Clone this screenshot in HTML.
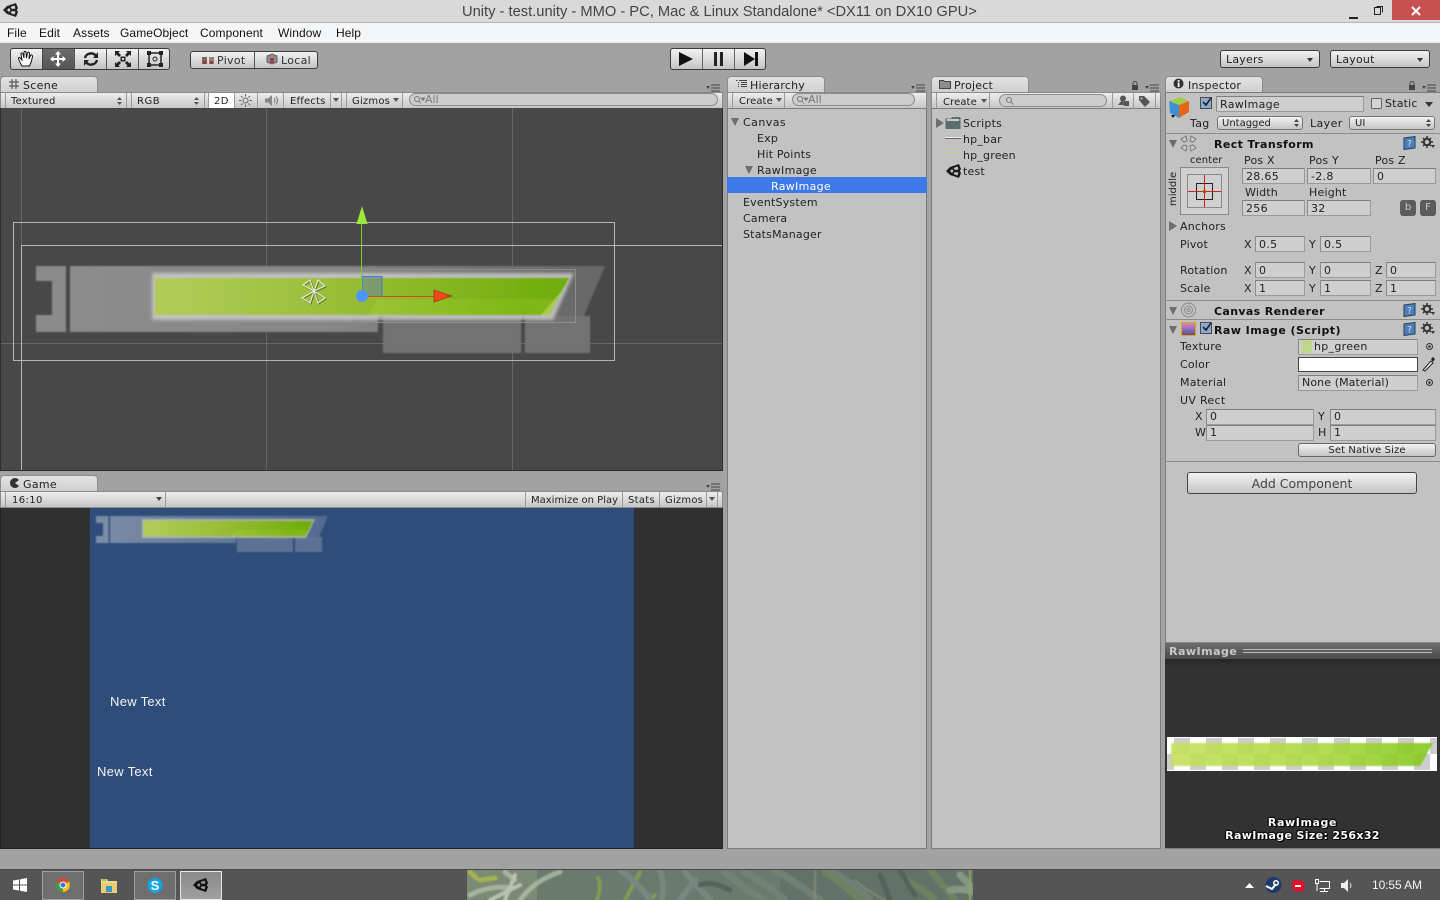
<!DOCTYPE html>
<html><head><meta charset="utf-8"><title>Unity - test.unity</title>
<style>
html,body{margin:0;padding:0;width:1440px;height:900px;overflow:hidden;background:#a2a2a2}
*{box-sizing:border-box}
div,span,svg{position:absolute}
body{font:11px/14px "DejaVu Sans","Liberation Sans",sans-serif;color:#1a1a1a}
.t{white-space:nowrap;height:14px;line-height:14px;padding-top:1px}
.np{padding-top:0}
.b{font-weight:bold}
.m{font-family:"Liberation Sans",sans-serif;font-size:12px;letter-spacing:.1px;color:#111;top:26px;padding-top:0}
.tab{background:linear-gradient(#e2e2e2,#cfcfcf);border:1px solid #8c8c8c;border-bottom:0;border-radius:4px 4px 0 0;height:17px;top:76px;width:98px}
.bar{background:linear-gradient(#ededed,#c6c6c6);border:1px solid #8a8a8a;height:17px}
.sep{width:1px;background:#9a9a9a;top:93px;height:15px}
.panel{background:#c2c2c2;border:1px solid #7c7c7c;top:108px;height:741px}
.btn{background:linear-gradient(#f2f2f2,#c4c4c4);border:1px solid #3c3c3c;border-radius:3px}
.f{background:#cfcfcf;border:1px solid #9a9a9a;border-top-color:#7e7e7e;border-left-color:#8c8c8c;height:16px;padding-left:3px;line-height:14px;white-space:nowrap;color:#222}
.g{padding-top:1px}
.h{height:1px;background:#8a8a8a;left:1165px;width:275px}
.lab{color:#222;letter-spacing:.2px}
.srch{border:1px solid #8a8a8a;border-radius:8px;background:#cdcdcd;height:13px}
.mn{width:14px;height:8px}
.tri{width:0;height:0;border-left:4px solid transparent;border-right:4px solid transparent;border-top:8px solid #6d6d6d}
.trir{width:0;height:0;border-top:5px solid transparent;border-bottom:5px solid transparent;border-left:8px solid #6d6d6d}
.dd{width:0;height:0;border-left:3px solid transparent;border-right:3px solid transparent;border-top:4px solid #333}
.shadow{text-shadow:1px 1px 0 #000,-1px 0 1px #000,0 -1px 1px #000,1px 0 1px #000}
</style></head>
<body>
<!-- title bar -->
<div style="left:0;top:0;width:1440px;height:23px;background:#d9d9d9;border-bottom:1px solid #b4b4b4"></div>
<svg style="left:3px;top:3px" width="15" height="14" viewBox="0 0 15 14"><path d="M0 7L4 3L13 0L15 5L13.800 7L15 9L13 14L4 11Z M4 7L6 5L7.500 7L6 9Z M7.500 4L11.500 2.500L12.500 5.500L9 6Z M7.500 10L9 8L12.500 8.500L11.500 11.500Z" fill="#222" fill-rule="evenodd"/></svg>
<div class="t np" style="left:462px;top:3px;height:18px;font:14.7px/18px 'Liberation Sans',sans-serif;color:#444;width:515px">Unity - test.unity - MMO - PC, Mac &amp; Linux Standalone* &lt;DX11 on DX10 GPU&gt;</div>
<div style="left:1349px;top:17px;width:9px;height:2px;background:#222"></div>
<svg style="left:1373px;top:4px" width="11" height="12"><path d="M3.500 2.500H9.500V8.500M1.500 3.500H7.500V10.500H1.500Z" fill="none" stroke="#222"/></svg>
<div style="left:1392px;top:0;width:48px;height:20px;background:#c75050"></div>
<svg style="left:1410px;top:5px" width="12" height="12"><path d="M2 2L10 10M10 2L2 10" stroke="#fff" stroke-width="2"/></svg>
<!-- menu -->
<div style="left:0;top:23px;width:1440px;height:19px;background:#f5f6f7"></div>
<div style="left:0;top:42px;width:1440px;height:1px;background:#e8e8e8"></div>
<span class="t m" style="left:7px">File</span><span class="t m" style="left:39px">Edit</span><span class="t m" style="left:73px">Assets</span><span class="t m" style="left:120px">GameObject</span><span class="t m" style="left:200px">Component</span><span class="t m" style="left:278px">Window</span><span class="t m" style="left:336px">Help</span>
<!-- toolbar: tools -->
<div class="btn" style="left:10px;top:48px;width:160px;height:22px"></div>
<div style="left:42px;top:49px;width:33px;height:20px;background:linear-gradient(#6c6c6c,#555)"></div>
<div style="left:74px;top:49px;width:1px;height:20px;background:#555"></div><div style="left:106px;top:49px;width:1px;height:20px;background:#555"></div><div style="left:138px;top:49px;width:1px;height:20px;background:#555"></div><div style="left:42px;top:49px;width:1px;height:20px;background:#444"></div>
<svg style="left:17px;top:50px" width="18" height="18" viewBox="0 0 18 18"><path d="M5 16 C3 13 2 10 1.500 8.500 C1.500 7 3 7 4 9 L5 10 L4 4 C4 2.500 5.500 2.500 6 4 L7 8 L7 2.500 C7 1 9 1 9 2.500 L9.500 8 L10.500 3 C11 1.500 12.500 2 12.500 3.500 L12 9 L13.500 5.500 C14.500 4.500 15.500 5 15.500 6.500 C15 10 14 13 12.500 16 Z" fill="#fff" stroke="#111"/></svg>
<svg style="left:49px;top:50px" width="18" height="18" viewBox="0 0 18 18"><path d="M9 1L12 4.500H10V8H13.500V6L17 9L13.500 12V10H10V13.500H12L9 17L6 13.500H8V10H4.500V12L1 9L4.500 6V8H8V4.500H6Z" fill="#fff"/></svg>
<svg style="left:82px;top:50px" width="18" height="18" viewBox="0 0 18 18" fill="none" stroke="#222" stroke-width="2.400"><path d="M3 8A6 5.500 0 0 1 14 6M15 10A6 5.500 0 0 1 4 12"/><path d="M16 2V8H11L16 2ZM2 16V10H7Z" fill="#222" stroke="none"/></svg>
<svg style="left:114px;top:50px" width="18" height="18" viewBox="0 0 18 18" fill="#222"><path d="M6.500 6.500H11.500V11.500H6.500ZM8 8V10H10V8Z" fill-rule="evenodd"/><path d="M1 1H6L4.500 2.500 7 5 5 7 2.500 4.500 1 6ZM17 1V6L15.500 4.500 13 7 11 5 13.500 2.500 12 1ZM1 17V12L2.500 13.500 5 11 7 13 4.500 15.500 6 17ZM17 17H12L13.500 15.500 11 13 13 11 15.500 13.500 17 12Z"/></svg>
<svg style="left:146px;top:50px" width="18" height="18" viewBox="0 0 18 18"><path d="M3 3H15V15H3Z" fill="none" stroke="#222" stroke-width="1.500"/><circle cx="9" cy="9" r="2" fill="none" stroke="#222"/><g fill="#222"><rect x="1" y="1" width="4" height="4"/><rect x="13" y="1" width="4" height="4"/><rect x="1" y="13" width="4" height="4"/><rect x="13" y="13" width="4" height="4"/></g></svg>
<!-- pivot local -->
<div class="btn" style="left:190px;top:51px;width:128px;height:18px"></div>
<div style="left:254px;top:52px;width:1px;height:16px;background:#555"></div>
<svg style="left:201px;top:55px" width="14" height="10"><rect x="1" y="2" width="5" height="7" fill="#6d6d6d"/><rect x="2" y="6" width="3" height="3" fill="#b03030"/><rect x="8" y="2" width="5" height="7" fill="#888"/><rect x="9" y="6" width="3" height="3" fill="#b03030"/></svg>
<span class="t" style="left:217px;top:53px;color:#333;letter-spacing:.3px">Pivot</span>
<svg style="left:266px;top:53px" width="12" height="12"><path d="M6 1L11 3V9L6 11L1 9V3Z" fill="#8d8d8d" stroke="#666"/><rect x="4" y="5" width="4" height="5" fill="#a54040"/></svg>
<span class="t" style="left:281px;top:53px;color:#333;letter-spacing:.3px">Local</span>
<!-- play -->
<div class="btn" style="left:670px;top:48px;width:96px;height:22px"></div>
<div style="left:702px;top:49px;width:1px;height:20px;background:#666"></div><div style="left:734px;top:49px;width:1px;height:20px;background:#666"></div>
<svg style="left:678px;top:52px" width="16" height="14"><path d="M1 0L15 7L1 14Z" fill="#111"/></svg>
<svg style="left:714px;top:52px" width="10" height="14"><rect x="0" y="0" width="3" height="14" fill="#222"/><rect x="6" y="0" width="3" height="14" fill="#222"/></svg>
<svg style="left:743px;top:52px" width="16" height="14"><path d="M1 0L12 7L1 14Z" fill="#111"/><rect x="12" y="0" width="3" height="14" fill="#111"/></svg>
<!-- layers / layout -->
<div class="btn" style="left:1220px;top:50px;width:100px;height:18px"></div>
<span class="t" style="left:1226px;top:52px;color:#222;letter-spacing:.2px">Layers</span><div class="dd" style="left:1307px;top:58px"></div>
<div class="btn" style="left:1330px;top:50px;width:100px;height:18px"></div>
<span class="t" style="left:1336px;top:52px;color:#222;letter-spacing:.2px">Layout</span><div class="dd" style="left:1417px;top:58px"></div>

<!-- Scene -->
<div class="tab" style="left:0"></div>
<svg style="left:8px;top:78px" width="12" height="12"><path d="M4 1V11M8 1V11M1 4H11M1 8H11" stroke="#444"/></svg>
<span class="t" style="left:23px;top:78px;color:#222;letter-spacing:.3px">Scene</span>
<svg class="mn" style="left:706px;top:84px" viewBox="0 0 14 8"><path d="M0 2H4L2 5Z" fill="#444"/><path d="M5 1H14M5 4H14M5 7H14" stroke="#444"/></svg>
<div class="bar" style="left:0;top:92px;width:723px"></div>
<div class="sep" style="left:5px"></div><div class="sep" style="left:126px"></div><div class="sep" style="left:131px"></div><div class="sep" style="left:204px"></div><div class="sep" style="left:208px"></div><div class="sep" style="left:234px"></div><div class="sep" style="left:257px"></div><div class="sep" style="left:283px"></div><div class="sep" style="left:330px"></div><div class="sep" style="left:341px"></div><div class="sep" style="left:346px"></div><div class="sep" style="left:402px"></div>
<div style="left:209px;top:93px;width:25px;height:15px;background:#fff"></div>
<span class="t" style="left:11px;top:94px;font-size:10px;letter-spacing:.2px;color:#222">Textured</span>
<span class="t" style="left:137px;top:94px;font-size:10px;letter-spacing:.5px;color:#222">RGB</span>
<span class="t" style="left:214px;top:94px;font-size:10px;letter-spacing:.4px;color:#222">2D</span>
<span class="t" style="left:290px;top:94px;font-size:10px;letter-spacing:.2px;color:#222">Effects</span>
<span class="t" style="left:352px;top:94px;font-size:10px;letter-spacing:.2px;color:#222">Gizmos</span>
<svg style="left:116px;top:96px" width="7" height="10"><path d="M1 4L3.500 1L6 4ZM1 6L3.500 9L6 6Z" fill="#555"/></svg>
<svg style="left:193px;top:96px" width="7" height="10"><path d="M1 4L3.500 1L6 4ZM1 6L3.500 9L6 6Z" fill="#555"/></svg>
<svg style="left:239px;top:94px" width="13" height="13" fill="none" stroke="#666"><circle cx="6.500" cy="6.500" r="2.500"/><path d="M6.500 0V2.500M6.500 10.500V13M0 6.500H2.500M10.500 6.500H13M2 2L3.500 3.500M9.500 9.500L11 11M11 2L9.500 3.500M2 11L3.500 9.500"/></svg>
<svg style="left:264px;top:94px" width="15" height="13"><path d="M1 4.500H4L8 1V12L4 8.500H1Z" fill="#888"/><path d="M10 4Q12 6.500 10 9M12 2.500Q15 6.500 12 10.500" fill="none" stroke="#777"/></svg>
<div class="dd" style="left:333px;top:98px;border-top-color:#555"></div><div class="dd" style="left:393px;top:98px;border-top-color:#555"></div>
<div class="srch" style="left:409px;top:93px;width:309px"></div>
<svg style="left:413px;top:95px" width="12" height="10"><circle cx="4" cy="4" r="2.500" fill="none" stroke="#777"/><path d="M6 6L8 8.500M8 3H12L10 5.500Z" fill="#777" stroke="#777" stroke-width=".8"/></svg>
<span class="t" style="left:425px;top:92px;color:#777;font-size:11px">All</span>

<div style="left:0;top:108px;width:723px;height:363px;background:#484848;border:1px solid #2d2d2d;border-top:0"></div>
<svg style="left:1px;top:108px;overflow:hidden" width="721" height="362" viewBox="1 108 721 362">
<defs>
<linearGradient id="g1" x1="0" x2="1" y1="0" y2="0"><stop offset="0" stop-color="#8c8c8c"/><stop offset=".5" stop-color="#868686"/><stop offset="1" stop-color="#666"/></linearGradient>
<linearGradient id="g2" x1="0" x2="1" y1="0" y2="0"><stop offset="0" stop-color="#b3cc58"/><stop offset=".5" stop-color="#95bc33"/><stop offset="1" stop-color="#6dac06"/></linearGradient>
<linearGradient id="g3" x1="0" x2="1" y1="0" y2="0"><stop offset="0" stop-color="#9ac435"/><stop offset=".8" stop-color="#7eb714"/><stop offset="1" stop-color="#7eb714"/></linearGradient>
<linearGradient id="g4" x1="0" x2="1" y1="0" y2="0"><stop offset="0" stop-color="#788aa4"/><stop offset="1" stop-color="#536a8f"/></linearGradient>
<filter id="bl" x="-5%" y="-10%" width="110%" height="120%"><feGaussianBlur stdDeviation="0.9"/></filter>
<filter id="bl2" x="-5%" y="-20%" width="110%" height="140%"><feGaussianBlur stdDeviation="1.6"/></filter>
</defs>
<path d="M21.500 108V245M266.500 108V470M512.500 108V470M1 343.500H722" stroke="#666" fill="none"/>
<g filter="url(#bl)">
<path d="M36 266H66V332H36V315H52V281H36Z" fill="#8a8a8a"/>
<path d="M70 266H605L584 316H378V332H70Z" fill="url(#g1)"/>
<rect x="383" y="316" width="138" height="37" fill="#737373"/>
<rect x="525" y="316" width="65" height="37" fill="#737373"/>
</g>
<path d="M152 273H574L553 320H152Z" fill="#d4d4d4" opacity=".75" filter="url(#bl2)"/>
<g filter="url(#bl)">
<path d="M155 278H569L549 315H155Z" fill="url(#g2)"/>
<path d="M369 315L377 299H558L549 315Z" fill="url(#g3)"/>
<path d="M561 292L569 278L549 315H541Z" fill="#a9cd4c"/>
</g>
<rect x="148.500" y="269.500" width="427" height="53" fill="none" stroke="#8d8d8d"/>
<rect x="13.500" y="222.500" width="601" height="138" fill="none" stroke="#b5b5b5"/>
<path d="M722 245.500H21.500V470" fill="none" stroke="#b5b5b5"/>
<rect x="362" y="276.500" width="20" height="20" fill="#6b8a8f" fill-opacity=".65" stroke="#4878d0"/>
<path d="M361.500 223V296" stroke="#82c83a"/>
<path d="M362 206L367.500 224H356.500Z" fill="#9ae83a"/>
<path d="M362 296.500H436" stroke="#d84a1c"/>
<path d="M434 290L452 296L434 302Z" fill="#f04818" stroke="#8a2a08" stroke-width=".6"/>
<ellipse cx="362" cy="296" rx="6" ry="6" fill="#4c96f0"/>
<g fill="none" stroke="#222" stroke-width="1" opacity=".5" transform="translate(1 1)"><path d="M314 291L303 285L310 280Z"/><path d="M314 291L325 286L318 280Z"/><path d="M314 291L302 298L310 303Z"/><path d="M314 291L325 298L318 303Z"/></g>
<g fill="none" stroke="#eee" stroke-width="1"><path d="M314 291L303 285L310 280Z"/><path d="M314 291L325 286L318 280Z"/><path d="M314 291L302 298L310 303Z"/><path d="M314 291L325 298L318 303Z"/></g>
</svg>

<!-- Game -->
<div class="tab" style="left:0;top:475px"></div>
<svg style="left:9px;top:477px" width="12" height="12"><path d="M10 3A5 5 0 1 0 10 9L6 6Z" fill="#333"/></svg>
<span class="t" style="left:23px;top:477px;color:#222;letter-spacing:.3px">Game</span>
<svg class="mn" style="left:706px;top:483px" viewBox="0 0 14 8"><path d="M0 2H4L2 5Z" fill="#444"/><path d="M5 1H14M5 4H14M5 7H14" stroke="#444"/></svg>
<div class="bar" style="left:0;top:491px;width:723px"></div>
<div class="sep" style="left:5px;top:492px"></div><div class="sep" style="left:165px;top:492px"></div><div class="sep" style="left:525px;top:492px"></div><div class="sep" style="left:622px;top:492px"></div><div class="sep" style="left:659px;top:492px"></div><div class="sep" style="left:706px;top:492px"></div><div class="sep" style="left:717px;top:492px"></div>
<span class="t" style="left:12px;top:493px;font-size:10px;letter-spacing:.4px;color:#222">16:10</span>
<div class="dd" style="left:156px;top:497px;border-top-color:#444"></div>
<span class="t" style="left:531px;top:493px;font-size:10px;color:#222">Maximize on Play</span>
<span class="t" style="left:628px;top:493px;font-size:10px;letter-spacing:.3px;color:#222">Stats</span>
<span class="t" style="left:665px;top:493px;font-size:10px;letter-spacing:.2px;color:#222">Gizmos</span>
<div class="dd" style="left:709px;top:497px;border-top-color:#555"></div>
<div style="left:0;top:508px;width:723px;height:341px;background:#303030;border:1px solid #242424;border-top:0"></div>
<div style="left:90px;top:508px;width:544px;height:340px;background:#2f4d7a"></div>
<svg style="left:90px;top:508px" width="250" height="50" viewBox="90 508 250 50">
<g filter="url(#bl)">
<path d="M96 516H108.500V543H96V536H103V523H96Z" fill="#7a8ca6"/>
<path d="M110 516H328L319 537H236V543H110Z" fill="url(#g4)"/>
<rect x="237" y="537" width="56" height="15" fill="#5d7194"/>
<rect x="295" y="537" width="27" height="15" fill="#5d7194"/>
</g>
<path d="M142 519H315L306 538H142Z" fill="#c4cfa8" opacity=".7" filter="url(#bl)"/>
<g filter="url(#bl)">
<path d="M144 521H313L305 536H144Z" fill="url(#g2)"/>
<path d="M231 536L236 530H309L305 536Z" fill="url(#g3)"/>
</g>
</svg>
<span class="t np" style="left:110px;top:694px;font:13px/16px 'Liberation Sans',sans-serif;height:16px;color:#f2f2f2;letter-spacing:.3px">New Text</span>
<span class="t np" style="left:97px;top:764px;font:13px/16px 'Liberation Sans',sans-serif;height:16px;color:#f2f2f2;letter-spacing:.3px">New Text</span>

<!-- Hierarchy -->
<div class="tab" style="left:727px"></div>
<svg style="left:735px;top:79px" width="13" height="10"><path d="M1 1.500H2.500M3 3.500H4M3 5.500H4M3 7.500H4" stroke="#444"/><path d="M4 1.500H12M6 3.500H12M6 5.500H12M6 7.500H12" stroke="#444"/></svg>
<span class="t" style="left:750px;top:78px;color:#222;letter-spacing:.2px">Hierarchy</span>
<svg class="mn" style="left:911px;top:84px" viewBox="0 0 14 8"><path d="M0 2H4L2 5Z" fill="#444"/><path d="M5 1H14M5 4H14M5 7H14" stroke="#444"/></svg>
<div class="bar" style="left:727px;top:92px;width:200px"></div>
<div class="sep" style="left:732px"></div><div class="sep" style="left:784px"></div>
<span class="t" style="left:739px;top:94px;font-size:10px;letter-spacing:.1px;color:#222">Create</span><div class="dd" style="left:776px;top:98px;border-top-color:#555"></div>
<div class="srch" style="left:792px;top:93px;width:123px"></div>
<svg style="left:796px;top:95px" width="12" height="10"><circle cx="4" cy="4" r="2.500" fill="none" stroke="#777"/><path d="M6 6L8 8.500M8 3H12L10 5.500Z" fill="#777" stroke="#777" stroke-width=".8"/></svg>
<span class="t" style="left:808px;top:92px;color:#777">All</span>
<div class="panel" style="left:727px;width:200px"></div>
<div style="left:727px;top:177px;width:200px;height:16px;background:#3d7ae8"></div>
<div class="tri" style="left:731px;top:118px"></div>
<div class="tri" style="left:745px;top:166px"></div>
<span class="t lab" style="left:743px;top:115px;letter-spacing:.45px">Canvas</span>
<span class="t lab" style="left:757px;top:131px">Exp</span>
<span class="t lab" style="left:757px;top:147px">Hit Points</span>
<span class="t lab" style="left:757px;top:163px;letter-spacing:.3px">RawImage</span>
<span class="t" style="left:771px;top:179px;color:#fff;letter-spacing:.3px">RawImage</span>
<span class="t lab" style="left:743px;top:195px">EventSystem</span>
<span class="t lab" style="left:743px;top:211px">Camera</span>
<span class="t lab" style="left:743px;top:227px">StatsManager</span>

<!-- Project -->
<div class="tab" style="left:931px"></div>
<svg style="left:939px;top:79px" width="12" height="10"><path d="M.5 9.500V1.500H4.500L5.500 2.500H11.500V9.500Z" fill="#8e8e8e" stroke="#444"/></svg>
<span class="t" style="left:954px;top:78px;color:#222;letter-spacing:.2px">Project</span>
<svg style="left:1131px;top:81px" width="8" height="10"><path d="M2 4V2.500A2 2 0 0 1 6 2.500V4" fill="none" stroke="#444"/><rect x="1" y="4" width="6" height="5" fill="#444"/></svg>
<svg class="mn" style="left:1145px;top:84px" viewBox="0 0 14 8"><path d="M0 2H4L2 5Z" fill="#444"/><path d="M5 1H14M5 4H14M5 7H14" stroke="#444"/></svg>
<div class="bar" style="left:931px;top:92px;width:230px"></div>
<div class="sep" style="left:936px"></div><div class="sep" style="left:989px"></div><div class="sep" style="left:1112px"></div><div class="sep" style="left:1133px"></div><div class="sep" style="left:1155px"></div>
<span class="t" style="left:943px;top:95px;font-size:10px;letter-spacing:.1px;color:#222">Create</span><div class="dd" style="left:981px;top:99px;border-top-color:#555"></div>
<div class="srch" style="left:999px;top:94px;width:108px"></div>
<svg style="left:1005px;top:96px" width="10" height="10"><circle cx="4" cy="4" r="2.500" fill="none" stroke="#777"/><path d="M6 6L8.500 8.500" stroke="#777"/></svg>
<svg style="left:1117px;top:95px" width="13" height="12"><circle cx="6" cy="3.500" r="3" fill="#555"/><path d="M1 10L5 5L9 10Z" fill="#555"/><rect x="7" y="6" width="5" height="5" fill="#555"/></svg>
<svg style="left:1138px;top:95px" width="13" height="12"><path d="M1 1H6L12 7L7 12L1 5Z" fill="#555"/><circle cx="3.500" cy="3.500" r="1" fill="#ccc"/></svg>
<div class="panel" style="left:931px;width:230px"></div>
<div class="trir" style="left:936px;top:118px"></div>
<svg style="left:945px;top:116px" width="16" height="14"><path d="M.5 13V2.500H6L7 1H15.500V13Z" fill="#5d6d6c"/><rect x="2" y="3" width="12" height="2" fill="#ccc"/></svg>
<div style="left:945px;top:137px;width:16px;height:1px;background:#f0f0f0"></div>
<div style="left:945px;top:138px;width:16px;height:1px;background:#666"></div>
<div style="left:945px;top:153px;width:16px;height:1px;background:#b7d07a"></div>
<svg style="left:946px;top:164px" width="15" height="14" viewBox="0 0 15 14"><path d="M0 7L4 3L13 0L15 5L13.800 7L15 9L13 14L4 11Z M4 7L6 5L7.500 7L6 9Z M7.500 4L11.500 2.500L12.500 5.500L9 6Z M7.500 10L9 8L12.500 8.500L11.500 11.500Z" fill="#1a1a1a" fill-rule="evenodd"/></svg>
<span class="t lab" style="left:963px;top:116px">Scripts</span>
<span class="t lab" style="left:963px;top:132px">hp_bar</span>
<span class="t lab" style="left:963px;top:148px">hp_green</span>
<span class="t lab" style="left:963px;top:164px">test</span>

<!-- Inspector -->
<div class="tab" style="left:1165px"></div>
<svg style="left:1173px;top:78px" width="11" height="11"><circle cx="5.500" cy="5.500" r="5" fill="#333"/><rect x="4.700" y="2" width="1.800" height="1.800" fill="#fff"/><rect x="4.700" y="4.500" width="1.800" height="4.500" fill="#fff"/></svg>
<span class="t" style="left:1188px;top:78px;color:#222;letter-spacing:.2px">Inspector</span>
<svg style="left:1408px;top:81px" width="8" height="10"><path d="M2 4V2.500A2 2 0 0 1 6 2.500V4" fill="none" stroke="#444"/><rect x="1" y="4" width="6" height="5" fill="#444"/></svg>
<svg class="mn" style="left:1422px;top:84px" viewBox="0 0 14 8"><path d="M0 2H4L2 5Z" fill="#444"/><path d="M5 1H14M5 4H14M5 7H14" stroke="#444"/></svg>
<div style="left:1165px;top:92px;width:275px;height:757px;background:#c2c2c2;border:1px solid #7c7c7c;border-right:0"></div>
<svg style="left:1168px;top:96px" width="22" height="24" viewBox="0 0 22 24"><path d="M1 5L12 1L21 5L11 9Z" fill="#9fcf4a"/><path d="M1 5L11 9V22L2 17Z" fill="#3d8fd6"/><path d="M11 9L21 5V16L11 22Z" fill="#e8641a"/><path d="M3 19L7 19L5 22Z" fill="#111"/></svg>
<div style="left:1200px;top:97px;width:12px;height:12px;background:#8ea9cf;border:1px solid #4a4a4a"></div>
<svg style="left:1201px;top:96px" width="12" height="12"><path d="M2 6L5 9L10 2" fill="none" stroke="#123" stroke-width="1.600"/></svg>
<div class="f g" style="left:1216px;top:96px;width:148px;letter-spacing:.3px">RawImage</div>
<div style="left:1371px;top:98px;width:11px;height:11px;background:#d4d4d4;border:1px solid #666;border-radius:1px"></div>
<span class="t lab" style="left:1385px;top:96px">Static</span>
<div class="dd" style="left:1425px;top:102px;border-left-width:4px;border-right-width:4px;border-top-width:5px;border-top-color:#333"></div>
<span class="t lab" style="left:1190px;top:116px;letter-spacing:.3px">Tag</span>
<div class="btn" style="left:1217px;top:116px;width:86px;height:14px;border-color:#777"></div>
<span class="t" style="left:1222px;top:116px;font-size:10px;color:#222">Untagged</span>
<svg style="left:1293px;top:118px" width="7" height="10"><path d="M1 4L3.500 1L6 4ZM1 6L3.500 9L6 6Z" fill="#444"/></svg>
<span class="t lab" style="left:1310px;top:116px;letter-spacing:.4px">Layer</span>
<div class="btn" style="left:1349px;top:116px;width:86px;height:14px;border-color:#777"></div>
<span class="t" style="left:1355px;top:116px;font-size:10px;color:#222">UI</span>
<svg style="left:1425px;top:118px" width="7" height="10"><path d="M1 4L3.500 1L6 4ZM1 6L3.500 9L6 6Z" fill="#444"/></svg>
<div class="h" style="top:133px"></div>
<!-- Rect Transform -->
<div class="tri" style="left:1169px;top:140px"></div>
<svg style="left:1180px;top:135px" width="17" height="17" fill="#c8c8c8" stroke="#777"><path d="M1 4L6 1L7 6L4 7Z"/><path d="M16 4L11 1L10 6L13 7Z"/><path d="M1 13L6 16L7 11L4 10Z"/><path d="M16 13L11 16L10 11L13 10Z"/></svg>
<span class="t b" style="left:1214px;top:137px;letter-spacing:.4px;color:#111">Rect Transform</span>
<svg style="left:1403px;top:136px" width="13" height="14"><path d="M1 2L12 .5V12L1 13.500Z" fill="#4f7fb8" stroke="#20405f"/><text x="6.500" y="10.500" font-family="DejaVu Sans" font-size="9" fill="#cfe0f2" text-anchor="middle">?</text></svg>
<svg style="left:1421px;top:136px" width="14" height="13" viewBox="0 0 14 13"><circle cx="6" cy="6" r="3.200" fill="none" stroke="#333" stroke-width="2"/><path d="M6 0V2M6 10V12M0 6H2M10 6H12M2 2L3.500 3.500M8.500 8.500L10 10M10 2L8.500 3.500M2 10L3.500 8.500" stroke="#333" stroke-width="1.500"/><path d="M10 9H14L12 12Z" fill="#333"/></svg>
<span class="t" style="left:1190px;top:153px;font-size:10px;letter-spacing:.05px;color:#222">center</span>
<span class="t" style="left:1157px;top:183px;width:32px;font-size:10px;color:#222;transform:rotate(-90deg);text-align:center">middle</span>
<div style="left:1180px;top:167px;width:49px;height:48px;background:#d0d0d0;border:1px solid #8a8a8a"></div>
<div style="left:1187px;top:174px;width:35px;height:34px;border:1px solid #8a8a8a"></div>
<div style="left:1196px;top:183px;width:17px;height:17px;border:1px solid #222"></div>
<div style="left:1204px;top:175px;width:1px;height:32px;background:#d02020"></div>
<div style="left:1188px;top:191px;width:33px;height:1px;background:#d02020"></div>
<div style="left:1203px;top:190px;width:3px;height:3px;background:#a06000"></div>
<span class="t lab" style="left:1244px;top:153px">Pos X</span><span class="t lab" style="left:1309px;top:153px">Pos Y</span><span class="t lab" style="left:1375px;top:153px">Pos Z</span>
<div class="f g" style="left:1242px;top:168px;width:63px;letter-spacing:.3px">28.65</div><div class="f g" style="left:1307px;top:168px;width:64px;letter-spacing:.3px">-2.8</div><div class="f g" style="left:1373px;top:168px;width:63px">0</div>
<span class="t lab" style="left:1245px;top:185px">Width</span><span class="t lab" style="left:1309px;top:185px">Height</span>
<div class="f g" style="left:1242px;top:200px;width:63px;letter-spacing:.3px">256</div><div class="f g" style="left:1307px;top:200px;width:64px;letter-spacing:.3px">32</div>
<div style="left:1400px;top:200px;width:16px;height:16px;background:#5c5c5c;border-radius:3px;color:#ccc;text-align:center;line-height:16px;font-size:10px">b</div>
<div style="left:1420px;top:200px;width:16px;height:16px;background:#5c5c5c;border-radius:3px;color:#ccc;text-align:center;line-height:16px;font-size:10px">F</div>
<div class="trir" style="left:1169px;top:221px"></div>
<span class="t lab" style="left:1180px;top:219px">Anchors</span>
<span class="t lab" style="left:1180px;top:237px">Pivot</span>
<span class="t lab" style="left:1244px;top:237px">X</span><div class="f g" style="left:1255px;top:236px;width:50px;letter-spacing:.3px">0.5</div>
<span class="t lab" style="left:1309px;top:237px">Y</span><div class="f g" style="left:1320px;top:236px;width:51px;letter-spacing:.3px">0.5</div>
<span class="t lab" style="left:1180px;top:263px">Rotation</span>
<span class="t lab" style="left:1244px;top:263px">X</span><div class="f g" style="left:1255px;top:262px;width:50px">0</div>
<span class="t lab" style="left:1309px;top:263px">Y</span><div class="f g" style="left:1320px;top:262px;width:51px">0</div>
<span class="t lab" style="left:1375px;top:263px">Z</span><div class="f g" style="left:1386px;top:262px;width:50px">0</div>
<span class="t lab" style="left:1180px;top:281px">Scale</span>
<span class="t lab" style="left:1244px;top:281px">X</span><div class="f g" style="left:1255px;top:280px;width:50px">1</div>
<span class="t lab" style="left:1309px;top:281px">Y</span><div class="f g" style="left:1320px;top:280px;width:51px">1</div>
<span class="t lab" style="left:1375px;top:281px">Z</span><div class="f g" style="left:1386px;top:280px;width:50px">1</div>
<div class="h" style="top:300px"></div>
<!-- Canvas Renderer -->
<div class="tri" style="left:1169px;top:307px"></div>
<svg style="left:1180px;top:302px" width="17" height="16" fill="none" stroke="#8a8a8a"><circle cx="8.500" cy="8" r="7"/><circle cx="8.500" cy="8" r="4"/><circle cx="8.500" cy="8" r="1.500"/></svg>
<span class="t b" style="left:1214px;top:304px;letter-spacing:.35px;color:#111">Canvas Renderer</span>
<svg style="left:1403px;top:303px" width="13" height="14"><path d="M1 2L12 .5V12L1 13.500Z" fill="#4f7fb8" stroke="#20405f"/><text x="6.500" y="10.500" font-family="DejaVu Sans" font-size="9" fill="#cfe0f2" text-anchor="middle">?</text></svg>
<svg style="left:1421px;top:303px" width="14" height="13" viewBox="0 0 14 13"><circle cx="6" cy="6" r="3.200" fill="none" stroke="#333" stroke-width="2"/><path d="M6 0V2M6 10V12M0 6H2M10 6H12M2 2L3.500 3.500M8.500 8.500L10 10M10 2L8.500 3.500M2 10L3.500 8.500" stroke="#333" stroke-width="1.500"/><path d="M10 9H14L12 12Z" fill="#333"/></svg>
<div class="h" style="top:319px"></div>
<!-- Raw Image -->
<div class="tri" style="left:1169px;top:326px"></div>
<div style="left:1181px;top:322px;width:15px;height:14px;border:1px solid #d8a800;background:linear-gradient(#d888b8,#8868b8 60%,#5a5098)"></div>
<div style="left:1200px;top:322px;width:12px;height:12px;background:#8ea9cf;border:1px solid #4a4a4a"></div>
<svg style="left:1201px;top:321px" width="12" height="12"><path d="M2 6L5 9L10 2" fill="none" stroke="#123" stroke-width="1.600"/></svg>
<span class="t b" style="left:1214px;top:323px;letter-spacing:.45px;color:#111">Raw Image (Script)</span>
<svg style="left:1403px;top:322px" width="13" height="14"><path d="M1 2L12 .5V12L1 13.500Z" fill="#4f7fb8" stroke="#20405f"/><text x="6.500" y="10.500" font-family="DejaVu Sans" font-size="9" fill="#cfe0f2" text-anchor="middle">?</text></svg>
<svg style="left:1421px;top:322px" width="14" height="13" viewBox="0 0 14 13"><circle cx="6" cy="6" r="3.200" fill="none" stroke="#333" stroke-width="2"/><path d="M6 0V2M6 10V12M0 6H2M10 6H12M2 2L3.500 3.500M8.500 8.500L10 10M10 2L8.500 3.500M2 10L3.500 8.500" stroke="#333" stroke-width="1.500"/><path d="M10 9H14L12 12Z" fill="#333"/></svg>
<span class="t lab" style="left:1180px;top:339px">Texture</span>
<div class="f" style="left:1298px;top:339px;width:120px;padding-left:15px;letter-spacing:.3px">hp_green</div>
<div style="left:1302px;top:340px;width:10px;height:13px;background:#c0d68a"></div>
<svg style="left:1425px;top:342px" width="9" height="9" fill="none" stroke="#333"><circle cx="4.500" cy="4.500" r="3"/><circle cx="4.500" cy="4.500" r=".8" fill="#333"/></svg>
<span class="t lab" style="left:1180px;top:357px">Color</span>
<div style="left:1298px;top:357px;width:120px;height:15px;background:#fff;border:1px solid #444"></div>
<svg style="left:1421px;top:356px" width="15" height="16"><path d="M2 14L10 5L12 7L4 15Z" fill="#eee" stroke="#222"/><path d="M10 3L12 1L14 3L12 6Z" fill="#222"/></svg>
<span class="t lab" style="left:1180px;top:375px">Material</span>
<div class="f" style="left:1298px;top:375px;width:120px;letter-spacing:.1px">None (Material)</div>
<svg style="left:1425px;top:378px" width="9" height="9" fill="none" stroke="#333"><circle cx="4.500" cy="4.500" r="3"/><circle cx="4.500" cy="4.500" r=".8" fill="#333"/></svg>
<span class="t lab" style="left:1180px;top:393px;letter-spacing:.3px">UV Rect</span>
<span class="t lab" style="left:1195px;top:409px">X</span><div class="f" style="left:1206px;top:409px;width:108px">0</div>
<span class="t lab" style="left:1318px;top:409px">Y</span><div class="f" style="left:1330px;top:409px;width:106px">0</div>
<span class="t lab" style="left:1195px;top:425px">W</span><div class="f" style="left:1206px;top:425px;width:108px">1</div>
<span class="t lab" style="left:1318px;top:425px">H</span><div class="f" style="left:1330px;top:425px;width:106px">1</div>
<div class="btn" style="left:1298px;top:443px;width:138px;height:14px;border-color:#666;text-align:center;font-size:10px;line-height:14px;letter-spacing:.1px;color:#222">Set Native Size</div>
<div class="h" style="top:461px"></div>
<div class="btn" style="left:1187px;top:472px;width:230px;height:22px;border-color:#444;text-align:center;font-size:12.500px;line-height:22px;color:#444">Add Component</div>

<!-- Preview -->
<div style="left:1165px;top:642px;width:275px;height:17px;background:linear-gradient(#6e6e6e,#4a4a4a);border-top:1px solid #888"></div>
<span class="t b" style="left:1169px;top:644px;color:#c8c8c8;letter-spacing:.5px">RawImage</span>
<div style="left:1243px;top:649px;width:189px;height:1px;background:#bbb"></div><div style="left:1243px;top:652px;width:189px;height:1px;background:#bbb"></div>
<div style="left:1165px;top:659px;width:275px;height:189px;background:linear-gradient(#272727,#323232 4%,#323232)"></div>
<svg style="left:1167px;top:737px" width="270" height="34" viewBox="0 0 270 34">
<defs><pattern id="ck" x="7" y="1" width="32" height="32" patternUnits="userSpaceOnUse"><rect width="32" height="32" fill="#fff"/><rect width="16" height="16" fill="#cdcdcd"/><rect x="16" y="16" width="16" height="16" fill="#cdcdcd"/></pattern>
<linearGradient id="pg" x1="0" x2="1"><stop offset="0" stop-color="#c6e05c"/><stop offset=".6" stop-color="#a9d83f"/><stop offset="1" stop-color="#82c81c"/></linearGradient></defs>
<rect width="270" height="34" fill="#fff"/><rect y="1" width="270" height="32" fill="url(#ck)"/>
<path d="M4 6H266L253 29H4Z" fill="url(#pg)" fill-opacity=".9" filter="url(#bl)"/>
</svg>
<div class="t b shadow" style="left:1165px;top:815px;width:275px;text-align:center;color:#fff;letter-spacing:.6px">RawImage</div>
<div class="t b shadow" style="left:1165px;top:828px;width:275px;text-align:center;color:#fff;letter-spacing:.35px">RawImage Size: 256x32</div>

<!-- Taskbar -->
<div style="left:0;top:869px;width:1440px;height:31px;background:#555;border-top:1px solid #484848"></div>
<svg style="left:13px;top:878px" width="14" height="14"><path d="M0 2.500L6 1.500V6.500H0ZM7 1.400L14 0V6.500H7ZM0 7.500H6V12.500L0 11.500ZM7 7.500H14V14L7 12.700Z" fill="#fff"/></svg>
<div style="left:42px;top:871px;width:42px;height:29px;background:#6e6e6e;border:1px solid #a0a0a0"></div>
<svg style="left:56px;top:878px" width="14" height="14" viewBox="0 0 14 14"><circle cx="7" cy="7" r="7" fill="#d94436"/><path d="M7 7L13 3.500A7 7 0 0 1 7 14Z" fill="#f2c21a"/><path d="M7 7L7 14A7 7 0 0 1 1 3.500Z" fill="#3ba24a"/><circle cx="7" cy="7" r="3.500" fill="#fff"/><circle cx="7" cy="7" r="2.500" fill="#3a78d8"/></svg>
<svg style="left:100px;top:878px" width="18" height="16" viewBox="0 0 18 16"><path d="M1 1H7L8 3H17V15H1Z" fill="#f0d98a"/><path d="M1 5H17V15H1Z" fill="#e9cd74"/><rect x="6" y="8" width="6" height="6" fill="#3f9ac8"/><rect x="2" y="1" width="4" height="2" fill="#8fc850"/></svg>
<div style="left:134px;top:871px;width:42px;height:29px;background:#6e6e6e;border:1px solid #a0a0a0"></div>
<svg style="left:147px;top:877px" width="16" height="17"><circle cx="8" cy="8.500" r="7.500" fill="#12a5e8"/><text x="8" y="13" font-family="Liberation Sans" font-weight="bold" font-size="13" fill="#fff" text-anchor="middle">S</text></svg>
<div style="left:180px;top:871px;width:42px;height:29px;background:linear-gradient(#8a8a8a,#a0a0a0);border:1px solid #e8e8e8"></div>
<svg style="left:193px;top:878px" width="15" height="14" viewBox="0 0 15 14"><path d="M0 7L4 3L13 0L15 5L13.800 7L15 9L13 14L4 11Z M4 7L6 5L7.500 7L6 9Z M7.500 4L11.500 2.500L12.500 5.500L9 6Z M7.500 10L9 8L12.500 8.500L11.500 11.500Z" fill="#111" fill-rule="evenodd"/></svg>
<svg style="left:467px;top:870px" width="506" height="30" viewBox="467 870 506 30">
<defs><filter id="wb"><feGaussianBlur stdDeviation="0.8"/></filter></defs>
<rect x="467" y="870" width="506" height="30" fill="#697a6e"/>
<rect x="467" y="870" width="70" height="30" fill="#7a8a74"/>
<rect x="780" y="870" width="193" height="30" fill="#637268"/>
<g fill="none" stroke-linecap="round" filter="url(#wb)" opacity=".7">
<path d="M470 895Q490 885 510 888M505 872L515 880M520 900Q535 880 560 872" stroke="#bcc4ae" stroke-width="5"/>
<path d="M480 880L495 878M470 872L476 878" stroke="#b5c344" stroke-width="5"/>
<path d="M490 900L520 885M515 875L505 900" stroke="#d6d9cd" stroke-width="4"/>
<path d="M597 900Q602 885 598 878M625 900L640 872M650 900L655 895" stroke="#8fa84a" stroke-width="4"/>
<path d="M620 870Q640 885 650 900M660 870Q665 885 662 900M680 900L695 880M685 872Q700 890 710 900" stroke="#7b9085" stroke-width="6"/>
<path d="M725 872Q745 890 765 900M745 872Q775 890 785 900M775 870Q800 885 820 900M830 870Q855 885 870 900" stroke="#76877a" stroke-width="7"/>
<path d="M815 870V900M855 880Q865 890 885 900" stroke="#9a9a86" stroke-width="1.500"/>
<path d="M825 872Q845 885 860 900M905 880Q925 890 935 900M930 870L955 900" stroke="#6f8a5e" stroke-width="7"/>
<path d="M950 890Q965 888 973 892M960 875L970 885" stroke="#93a78d" stroke-width="7"/>
<path d="M970 870V900" stroke="#a8b85a" stroke-width="2"/>
<path d="M700 885Q710 880 730 890M880 875L890 900M900 870Q905 880 915 895" stroke="#4e5c54" stroke-width="5"/>
</g>
</svg>
<svg style="left:1245px;top:883px" width="9" height="6"><path d="M0 5L4.500 0L9 5Z" fill="#fff"/></svg>
<svg style="left:1265px;top:877px" width="17" height="16" viewBox="0 0 17 16"><circle cx="8.500" cy="8" r="8" fill="#1b3a6b"/><circle cx="11" cy="6" r="3" fill="#fff"/><circle cx="11" cy="6" r="1.500" fill="#1b3a6b"/><path d="M1 9L7 12L11 7" stroke="#fff" stroke-width="2" fill="none"/></svg>
<svg style="left:1291px;top:879px" width="14" height="13"><path d="M2 1Q6 0 8 1L13 3Q14 8 13 12L7 13Q2 12 1 8Z" fill="#e0102a"/><rect x="4" y="6" width="6" height="2" fill="#fff"/></svg>
<svg style="left:1314px;top:878px" width="17" height="15" fill="none" stroke="#fff"><rect x="1.500" y="1.500" width="3" height="4"/><path d="M3 5.500V13M5.500 3.500H15.500V10.500H5.500M10.500 10.500V13.500M6 13.500H14"/></svg>
<svg style="left:1340px;top:878px" width="14" height="15"><path d="M1 5H4L8 1V14L4 10H1Z" fill="#eee"/><path d="M10 5Q12 7.500 10 10" fill="none" stroke="#ddd"/></svg>
<span class="t np" style="left:1372px;top:878px;font:12px/14px 'Liberation Sans',sans-serif;color:#f4f4f4;letter-spacing:-.1px">10:55 AM</span>
</body></html>
